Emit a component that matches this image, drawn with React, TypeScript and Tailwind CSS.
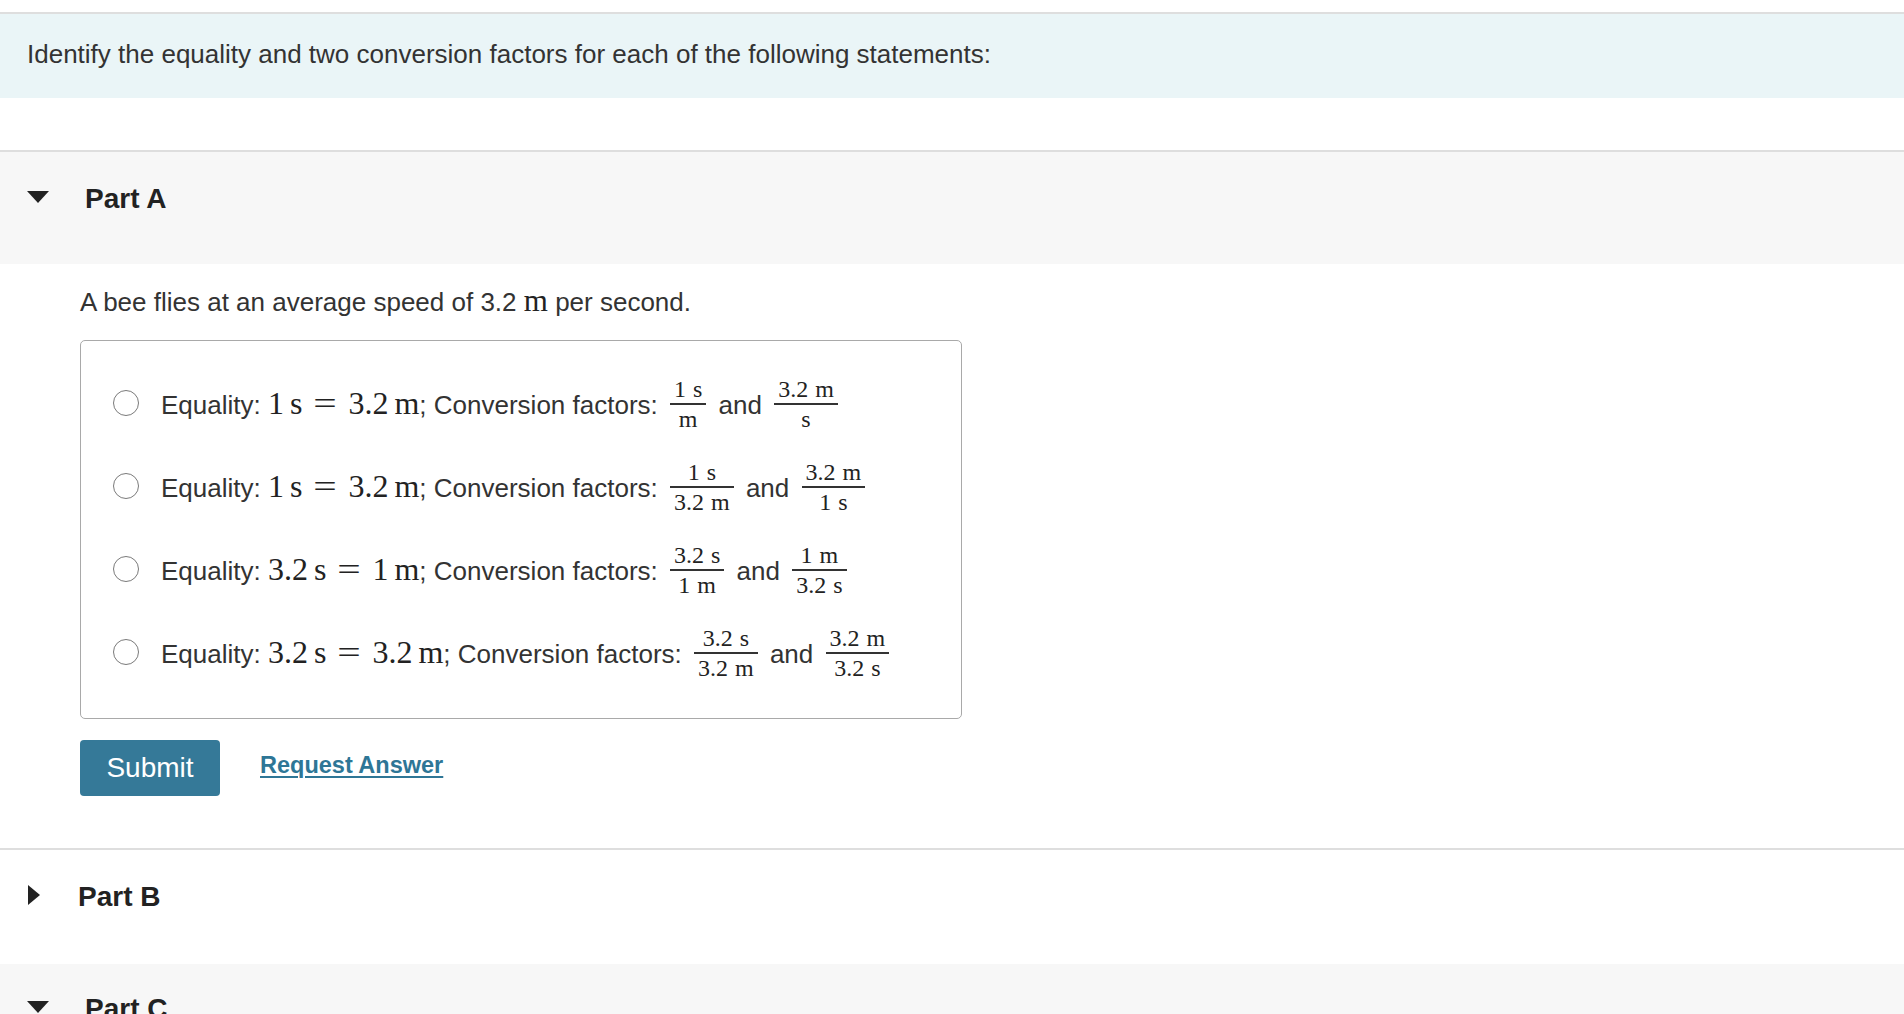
import React from "react";

const sans = "font-['Liberation_Sans',Arial,sans-serif]";

function M({ children }: { children: React.ReactNode }) {
  return <span className="font-['Liberation_Serif','Times_New_Roman',serif] text-[32px] text-[#222]">{children}</span>;
}

function Q({ n, u }: { n: string; u: string }) {
  return (
    <>
      {n}
      <span className="ml-[6px]">{u}</span>
    </>
  );
}

function Eq({ a, b }: { a: string; b: string }) {
  return (
    <M>
      <Q n={a} u="s" />
      <span className="inline-block mx-[14px] scale-x-[1.3]">=</span>
      <Q n={b} u="m" />
    </M>
  );
}

function Frac({ num, den }: { num: React.ReactNode; den: React.ReactNode }) {
  return (
    <span className="inline-flex flex-col items-center align-[17px] mx-[5px] font-['Liberation_Serif','Times_New_Roman',serif] text-[24px] leading-none text-[#222]">
      <span className="px-[4px] pb-[2px] whitespace-nowrap">{num}</span>
      <span className="h-[1.5px] self-stretch bg-[#333]" />
      <span className="px-[4px] pt-[2px] whitespace-nowrap">{den}</span>
    </span>
  );
}

function FQ({ n, u }: { n?: string; u: string }) {
  if (!n) return <>{u}</>;
  return (
    <>
      {n}
      <span className="ml-[7px]">{u}</span>
    </>
  );
}

type Opt = { a: string; b: string; f1: [string | undefined, string, string | undefined, string]; f2: [string | undefined, string, string | undefined, string] };

const options: Opt[] = [
  { a: "1", b: "3.2", f1: ["1", "s", undefined, "m"], f2: ["3.2", "m", undefined, "s"] },
  { a: "1", b: "3.2", f1: ["1", "s", "3.2", "m"], f2: ["3.2", "m", "1", "s"] },
  { a: "3.2", b: "1", f1: ["3.2", "s", "1", "m"], f2: ["1", "m", "3.2", "s"] },
  { a: "3.2", b: "3.2", f1: ["3.2", "s", "3.2", "m"], f2: ["3.2", "m", "3.2", "s"] },
];

function Row({ o }: { o: Opt }) {
  return (
    <div className="h-[83px] flex items-start">
      <span className="mt-[28px] w-[26px] h-[26px] rounded-full border-[1.5px] border-[#7a7a7a] bg-white shrink-0" />
      <div className="ml-[22px] mt-[15px] text-[26px] leading-[30px] text-[#333] whitespace-nowrap">
        Equality: <Eq a={o.a} b={o.b} />; Conversion factors:{" "}
        <Frac num={<FQ n={o.f1[0]} u={o.f1[1]} />} den={<FQ n={o.f1[2]} u={o.f1[3]} />} /> and{" "}
        <Frac num={<FQ n={o.f2[0]} u={o.f2[1]} />} den={<FQ n={o.f2[2]} u={o.f2[3]} />} />
      </div>
    </div>
  );
}

function DownTri({ className }: { className: string }) {
  return (
    <svg className={className} viewBox="0 0 22 12" width="22" height="12">
      <polygon points="0,0 22,0 11,12" fill="#222" />
    </svg>
  );
}

export default function App() {
  return (
    <div className={`${sans} w-[1904px] h-[1014px] overflow-hidden bg-white text-[#333] pt-[12px]`}>
      <div className="border-t-2 border-[#dedede] bg-[#eaf5f7] pt-[24px] pb-[28px] pl-[27px]">
        <p className="text-[26px] leading-[32px] text-[#333]">
          Identify the equality and two conversion factors for each of the following statements:
        </p>
      </div>

      <div className="mt-[52px] border-t-2 border-[#dedede] bg-[#f7f7f7] pt-[30px] pb-[48px] pl-[27px] flex items-start">
        <DownTri className="mt-[9px] w-[22px] h-[12px] shrink-0" />
        <span className="ml-[36px] text-[28px] leading-[34px] font-bold text-[#222]">Part A</span>
      </div>

      <div className="px-[80px] pb-[52px]">
        <p className="mt-[22px] text-[26px] leading-[30px] text-[#333] whitespace-nowrap">
          A bee flies at an average speed of 3.2{" "}
          <span className="font-['Liberation_Serif','Times_New_Roman',serif] text-[31px] text-[#222]">m</span> per second.
        </p>

        <div className="mt-[23px] w-[882px] border-[1.5px] border-[#a9a9a9] rounded-[5px] pt-[21px] pb-[24px] pl-[32px]">
          {options.map((o, i) => (
            <Row key={i} o={o} />
          ))}
        </div>

        <div className="mt-[21px] flex items-center">
          <button className="w-[140px] h-[56px] rounded-[4px] bg-[#357998] text-white text-[28px] leading-none">
            Submit
          </button>
          <a className="ml-[40px] -mt-[4px] text-[23.5px] font-bold text-[#2e7696] underline underline-offset-[3px] decoration-2">
            Request Answer
          </a>
        </div>
      </div>

      <div className="border-t-2 border-[#dedede] bg-white pt-[30px] pb-[50px] pl-[28px] flex items-start">
        <svg className="mt-[5px] w-[12px] h-[20px] shrink-0" viewBox="0 0 12 20" width="12" height="20">
          <polygon points="0,0 12,10 0,20" fill="#222" />
        </svg>
        <span className="ml-[38px] text-[28px] leading-[34px] font-bold text-[#222]">Part B</span>
      </div>

      <div className="bg-[#f7f7f7] pt-[28px] pb-[48px] pl-[27px] flex items-start">
        <DownTri className="mt-[9px] w-[22px] h-[12px] shrink-0" />
        <span className="ml-[36px] text-[28px] leading-[34px] font-bold text-[#222]">Part C</span>
      </div>
    </div>
  );
}
